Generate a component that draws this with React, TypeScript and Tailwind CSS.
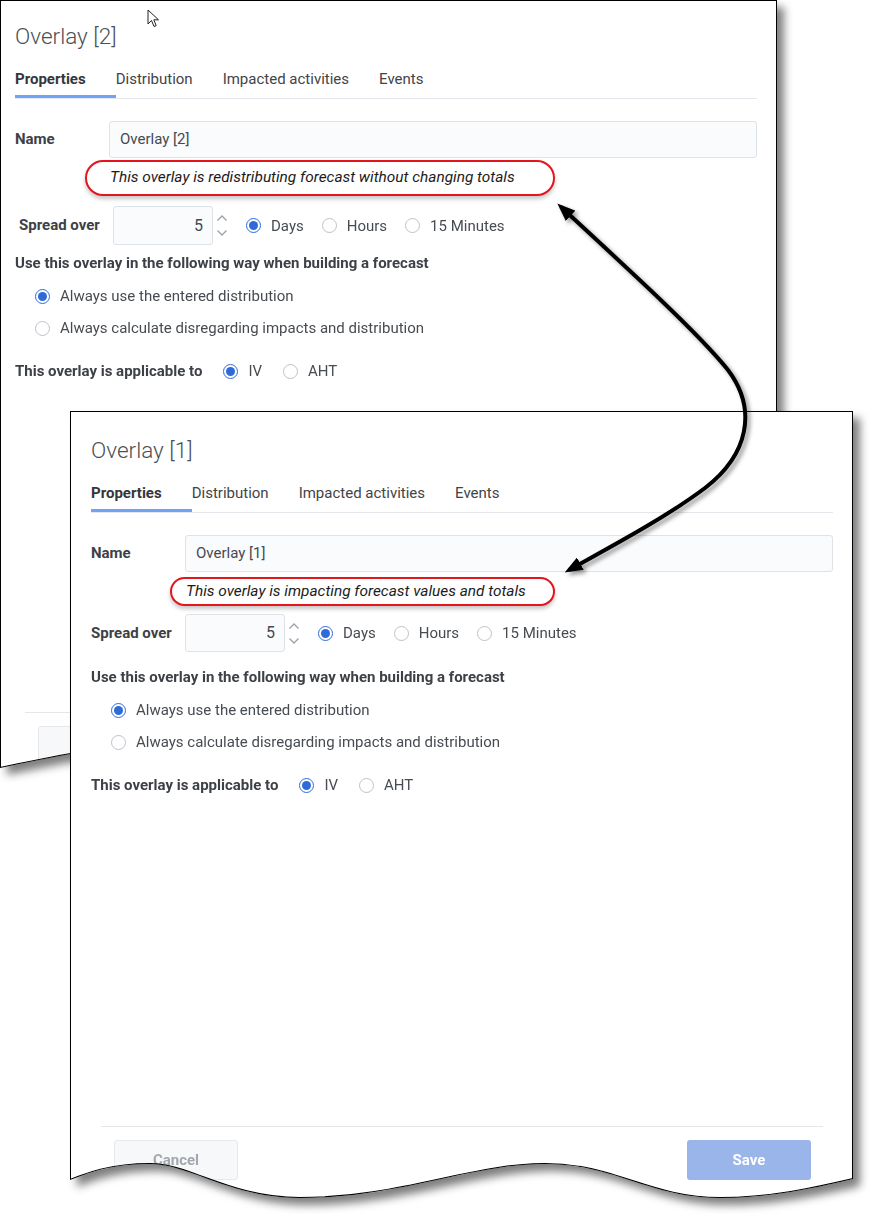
import React from 'react';

type Variant = {
  wrap: string;
  panel: string;
  outline: string;
  size: { w: number; h: number };
  titlePt: string;
  noteWrap: string;
  note: string;
  spreadRow: string;
  useMt: string;
};

const FRONT_PATH =
  'M0 0H783V768C740 778 700 787 650 787C580 787 545 753 475 753C400 753 330 787 230 787C160 787 120 753 80 753C40 753 15 763 0 769Z';
const BACK_PATH = 'M0 0H777V760C650 740 560 705 420 712C280 720 130 740 0 768Z';

const BACK: Variant = {
  wrap: 'absolute left-0 top-0 [filter:drop-shadow(7px_7px_4px_rgba(0,0,0,0.5))]',
  panel:
    "relative flex h-[787px] w-[777px] flex-col bg-white pl-[15px] pr-[20px] [clip-path:path('M0_0H777V760C650_740_560_705_420_712C280_720_130_740_0_768Z')]",
  outline: BACK_PATH,
  size: { w: 777, h: 787 },
  titlePt: 'pt-[22px]',
  noteWrap: 'ml-[70px] mt-[2px] flex h-[36px] w-[470px] items-center rounded-full border-2 border-[#e3161e] bg-white pl-[23px] shadow-[0_3px_4px_rgba(0,0,0,0.22)]',
  note: 'This overlay is redistributing forecast without changing totals',
  spreadRow: 'ml-[4px] mt-[10px] flex h-[39px] items-center',
  useMt: 'mt-[8px]',
};

const FRONT: Variant = {
  wrap: 'absolute left-[70px] top-[411px] [filter:drop-shadow(7px_7px_4px_rgba(0,0,0,0.5))]',
  panel:
    "relative flex h-[790px] w-[783px] flex-col bg-white pl-[21px] pr-[20px] [clip-path:path('M0_0H783V768C740_778_700_787_650_787C580_787_545_753_475_753C400_753_330_787_230_787C160_787_120_753_80_753C40_753_15_763_0_769Z')]",
  outline: FRONT_PATH,
  size: { w: 783, h: 790 },
  titlePt: 'pt-[25px]',
  noteWrap: 'ml-[79px] mt-[5px] flex h-[29px] w-[385px] items-center rounded-full border-2 border-[#e3161e] bg-white pl-[14px] shadow-[0_3px_4px_rgba(0,0,0,0.22)]',
  note: 'This overlay is impacting forecast values and totals',
  spreadRow: 'mt-[8px] flex h-[38px] items-center',
  useMt: 'mt-[15px]',
};

function Radio({ checked, label }: { checked?: boolean; label: string }) {
  return (
    <span className="flex h-[20px] items-center gap-[10px]">
      {checked ? (
        <span className="flex h-[15px] w-[15px] items-center justify-center rounded-full border-[1.5px] border-[#2f6bd8] bg-white">
          <span className="h-[9px] w-[9px] rounded-full bg-[#2f6bd8]" />
        </span>
      ) : (
        <span className="h-[15px] w-[15px] rounded-full border border-[#bcc2ca] bg-white" />
      )}
      <span className="text-[15px] leading-[20px] text-[#474c52]">{label}</span>
    </span>
  );
}

function Chevron({ up }: { up?: boolean }) {
  return (
    <svg width="12" height="8" viewBox="0 0 12 8" fill="none">
      <polyline
        points={up ? '1.5,6.5 6,2 10.5,6.5' : '1.5,1.5 6,6 10.5,1.5'}
        stroke="#9aa1a9"
        strokeWidth="1.3"
      />
    </svg>
  );
}

const TABS = ['Properties', 'Distribution', 'Impacted activities', 'Events'];

function OverlayWindow({ title, name, v }: { title: string; name: string; v: Variant }) {
  return (
    <div className={v.wrap}>
      <div className={v.panel}>
        <div className={`flex-1 ${v.titlePt}`}>
          <h1 className="text-[22.5px] font-light leading-[28px] text-[#4b5056]">{title}</h1>

          {/* tabs */}
          <div className="mt-[19px] flex border-b border-[#e4e7eb]">
            {TABS.map((t, i) => (
              <div
                key={t}
                className={
                  i === 0
                    ? 'border-b-[3px] border-[#70a2f6] pb-[6px] pr-[30px] text-[15px] font-bold leading-[20px] text-[#33373c]'
                    : 'border-b-[3px] border-transparent pb-[6px] pr-[30px] text-[15px] leading-[20px] text-[#3f4449]'
                }
              >
                {t}
              </div>
            ))}
          </div>

          {/* name */}
          <div className="mt-[22px] flex h-[37px] items-center">
            <span className="w-[94px] text-[15px] font-bold text-[#3d4146]">Name</span>
            <div className="flex h-full flex-1 items-center rounded-[3px] border border-[#dfe2e6] bg-[#fafbfc] pl-[10px] text-[15px] text-[#454a50]">
              {name}
            </div>
          </div>

          <div className={v.noteWrap}>
            <span className="text-[15.4px] italic text-[#1c1c1c]">{v.note}</span>
          </div>

          {/* spread over */}
          <div className={v.spreadRow}>
            <span className="w-[94px] text-[15px] font-bold text-[#3d4146]">Spread over</span>
            <div className="flex h-full w-[100px] items-center justify-end rounded-[3px] border border-[#dfe2e6] bg-[#fafbfc] pr-[9px] text-[16px] text-[#454a50]">
              5
            </div>
            <div className="ml-[3px] flex flex-col gap-[7px]">
              <Chevron up />
              <Chevron />
            </div>
            <div className="ml-[18px] flex gap-[18px]">
              <Radio checked label="Days" />
              <Radio label="Hours" />
              <Radio label="15 Minutes" />
            </div>
          </div>

          <p className={`${v.useMt} text-[15px] font-bold leading-[20px] text-[#3d4146]`}>
            Use this overlay in the following way when building a forecast
          </p>
          <div className="mt-[13px] flex flex-col gap-[12px] pl-[20px]">
            <Radio checked label="Always use the entered distribution" />
            <Radio label="Always calculate disregarding impacts and distribution" />
          </div>

          <div className="mt-[23px] flex items-center gap-[21px]">
            <span className="text-[15px] font-bold leading-[20px] text-[#3d4146]">This overlay is applicable to</span>
            <Radio checked label="IV" />
            <Radio label="AHT" />
          </div>
        </div>

        {/* footer */}
        <div className="mx-[10px] flex justify-between border-t border-[#e3e6ea] pb-[21px] pl-[13px] pr-[12px] pt-[13px]">
          <button className="h-[40px] w-[124px] rounded-[3px] border border-[#e6e8ec] bg-[#f7f8fa] text-[15px] font-bold text-[#a3a8ae]">
            Cancel
          </button>
          <button className="h-[40px] w-[124px] rounded-[3px] bg-[#9ab5ea] text-[15px] font-bold text-white">
            Save
          </button>
        </div>

        <svg
          className="pointer-events-none absolute left-0 top-0"
          width={v.size.w}
          height={v.size.h}
          viewBox={`0 0 ${v.size.w} ${v.size.h}`}
        >
          <path d={v.outline} fill="none" stroke="#000" strokeWidth="2" />
        </svg>
      </div>
    </div>
  );
}

export default function App() {
  return (
    <div className="relative h-[1223px] w-[878px] overflow-hidden bg-white font-['Roboto',sans-serif]">
      <OverlayWindow title="Overlay [2]" name="Overlay [2]" v={BACK} />

      {/* mouse cursor */}
      <svg className="absolute left-[147px] top-[9px]" width="14" height="20" viewBox="0 0 14 20">
        <path d="M1 1 L1 15 L4.5 11.5 L7 17.5 L9.2 16.6 L6.8 10.8 L11.5 10.8 Z" fill="#fff" stroke="#222" strokeWidth="1" />
      </svg>

      <OverlayWindow title="Overlay [1]" name="Overlay [1]" v={FRONT} />

      {/* connecting arrow */}
      <svg
        className="pointer-events-none absolute left-0 top-0 [filter:drop-shadow(3px_3px_2px_rgba(0,0,0,0.4))]"
        width="878"
        height="1223"
        viewBox="0 0 878 1223"
      >
        <defs>
          <marker
            id="head"
            markerUnits="userSpaceOnUse"
            markerWidth="18"
            markerHeight="14"
            viewBox="0 0 18 14"
            refX="13"
            refY="7"
            orient="auto-start-reverse"
          >
            <path d="M0 0 L18 7 L0 14 Z" fill="#000" />
          </marker>
        </defs>
        <path
          d="M561 207 C638 278 700 335 728 370 C758 410 748 455 705 488 C665 518 612 546 569 570"
          fill="none"
          stroke="#000"
          strokeWidth="4"
          markerStart="url(#head)"
          markerEnd="url(#head)"
        />
      </svg>
    </div>
  );
}
